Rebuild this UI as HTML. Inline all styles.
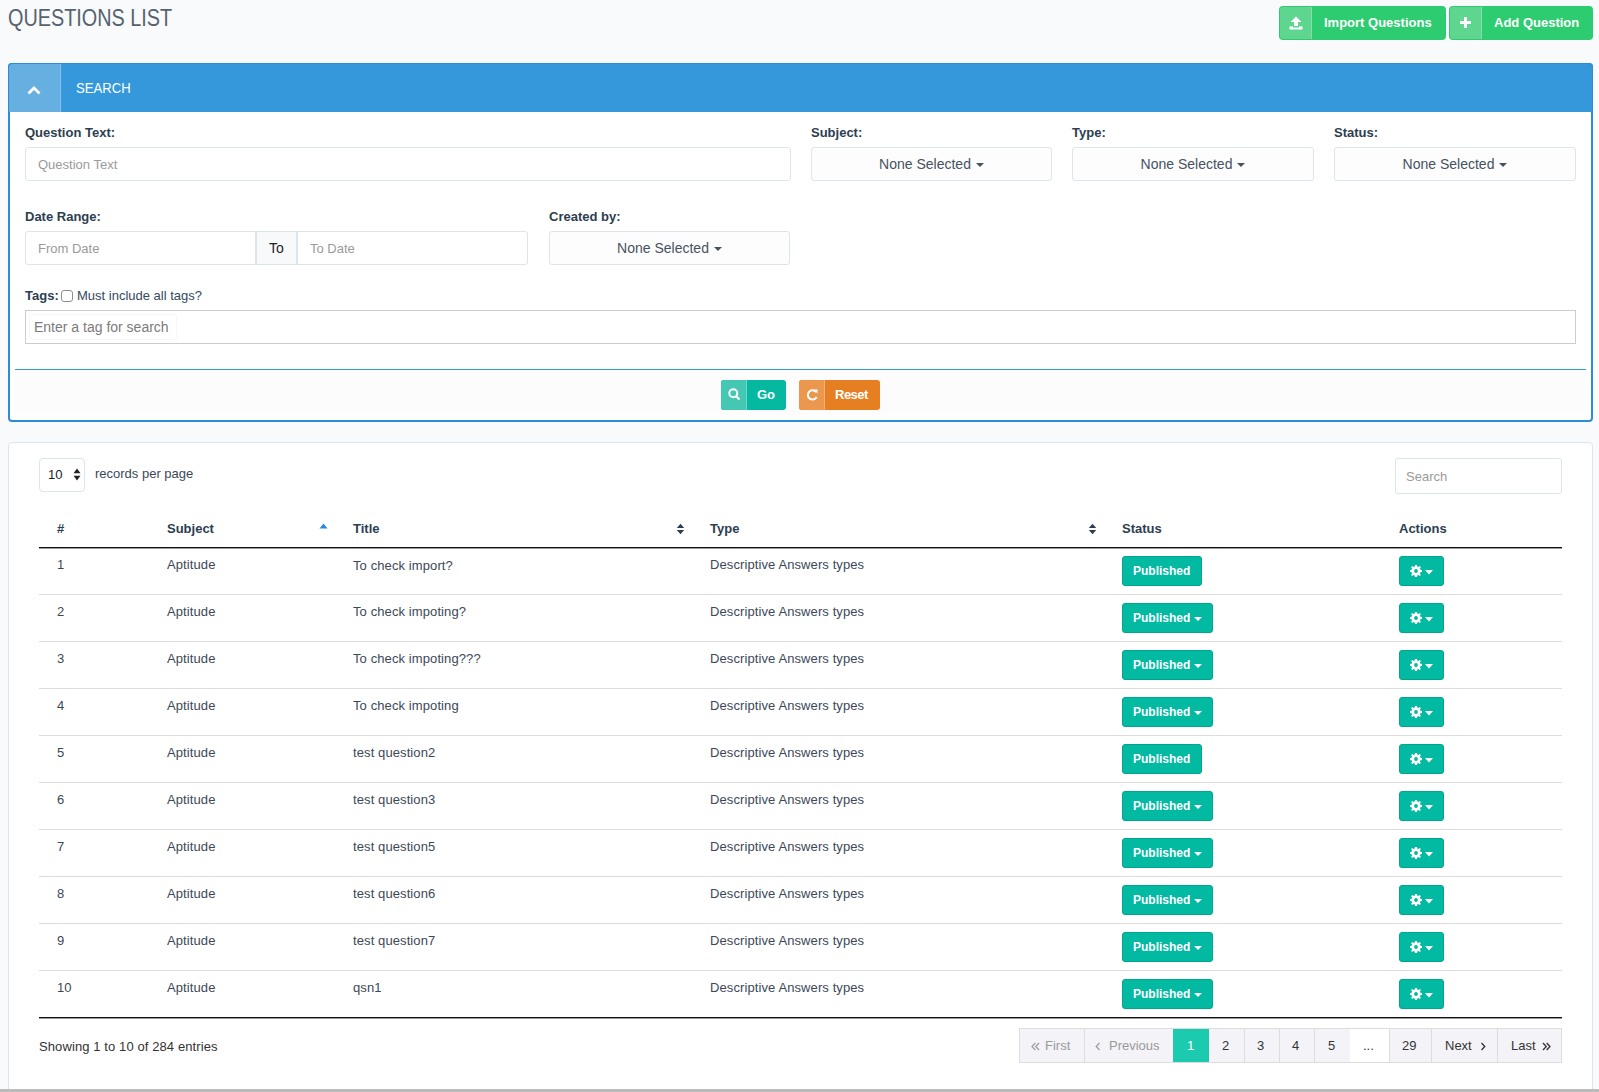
<!DOCTYPE html>
<html><head><meta charset="utf-8">
<style>
*{box-sizing:border-box;margin:0;padding:0}
html,body{width:1599px;height:1092px;overflow:hidden}
body{background:#f9fafc;font-family:"Liberation Sans",sans-serif;font-size:13px;color:#34495e;position:relative}
.abs{position:absolute}
.t{position:absolute;white-space:nowrap;line-height:16px}
.b{font-weight:bold}
/* title */
#title{left:8px;top:3px;font-size:23px;line-height:30px;color:#56636f;transform:scaleX(0.862);transform-origin:0 0}
/* green buttons */
.gbtn{position:absolute;top:6px;height:34px;background:#2ecc71;border-radius:4px;color:#fff;font-weight:bold;font-size:13px}
.gbtn .ic{position:absolute;left:1px;top:1px;width:32px;height:32px;background:#5fd690;border-radius:3px 0 0 3px;border-right:1px solid #7fdfa7}
.gbtn .tx{position:absolute;top:9px;line-height:16px;white-space:nowrap}
/* panel */
#sp{left:8px;top:63px;width:1585px;height:359px;border:2px solid #2d8bd7;border-radius:4px;background:#fff}
#sph{position:absolute;left:-2px;top:-2px;width:1585px;height:49px;background:#3498db;border-radius:4px 4px 0 0;border:1px solid #2d8bd7;border-bottom:0}
#tog{position:absolute;left:0;top:0;width:52px;height:48px;background:#66afe1;border-radius:4px 0 0 0;border-right:1px solid #86c1ea}
.lbl{position:absolute;font-weight:bold;color:#2c3e50;white-space:nowrap;line-height:16px}
.inp{position:absolute;height:34px;border:1px solid #dce4ec;border-radius:3px;background:#fff}
.ph{position:absolute;color:#9a9a9a;white-space:nowrap;line-height:16px}
.sel{position:absolute;height:34px;border:1px solid #dce4ec;border-radius:3px;background:#fdfdfe;color:#46525f;font-size:14px;text-align:center;line-height:32px}
.caret{display:inline-block;width:0;height:0;border-left:4px solid transparent;border-right:4px solid transparent;border-top:4px solid currentColor;vertical-align:middle;margin-left:5px;position:relative;top:0}
/* table panel */
#tp{left:8px;top:442px;width:1585px;height:700px;border:1px solid #dde6ef;border-radius:4px;background:#fff}
.row{position:absolute;left:39px;width:1523px;height:1px;background:#dddddd}
.pub{position:absolute;height:30px;background:#02b9a1;border:1px solid #00a68d;border-radius:3px;color:#fff;font-weight:bold;font-size:12px;line-height:28px;padding-left:10px;white-space:nowrap}
.gear{position:absolute;width:45px;height:30px;background:#02b9a1;border:1px solid #00a68d;border-radius:3px}
.td{color:#3c4858;letter-spacing:0.1px}
.th{font-weight:bold;color:#2c3e50}
.pgt{top:1038px;color:#333}
.pg{position:absolute;top:1028px;height:34px;border:1px solid #dddddd;background:#f3f3f8;color:#333;font-size:13px;line-height:32px;text-align:center;white-space:nowrap}
</style></head>
<body>
<div id="title" class="t">QUESTIONS LIST</div>

<div class="gbtn" style="left:1279px;width:167px"><div class="ic"></div><div class="tx" style="left:45px">Import Questions</div></div>
<div class="gbtn" style="left:1449px;width:144px"><div class="ic"></div><div class="tx" style="left:45px">Add Question</div></div>

<div id="sp" class="abs">
  <div id="sph"><div id="tog"></div>
    <div class="t" style="left:67px;top:16px;color:#fff;font-size:15px;transform:scaleX(0.875);transform-origin:0 0">SEARCH</div>
  </div>
</div>


<!-- icons on green buttons -->
<svg class="abs" style="left:1289px;top:16px" width="14" height="14" viewBox="0 0 14 14"><path d="M7 0.5 L12.5 6 H9 V10 H5 V6 H1.5 Z" fill="#fff"/><path d="M0.5 10.5 H4 V11.5 H10 V10.5 H13.5 V13.5 H0.5 Z" fill="#fff"/></svg>
<svg class="abs" style="left:1460px;top:17px" width="11" height="11" viewBox="0 0 11 11"><path d="M4 0H7V4H11V7H7V11H4V7H0V4H4Z" fill="#fff"/></svg>
<!-- chevron -->
<svg class="abs" style="left:27px;top:85px" width="14" height="10" viewBox="0 0 14 10"><path d="M1.5 8.5 L7 3 L12.5 8.5" stroke="#fff" stroke-width="2.8" fill="none"/></svg>

<!-- row 1 -->
<div class="lbl" style="left:25px;top:125px">Question Text:</div>
<div class="inp" style="left:25px;top:147px;width:766px"></div>
<div class="ph" style="left:38px;top:157px">Question Text</div>
<div class="lbl" style="left:811px;top:125px">Subject:</div>
<div class="sel" style="left:811px;top:147px;width:241px">None Selected<span class="caret"></span></div>
<div class="lbl" style="left:1072px;top:125px">Type:</div>
<div class="sel" style="left:1072px;top:147px;width:242px">None Selected<span class="caret"></span></div>
<div class="lbl" style="left:1334px;top:125px">Status:</div>
<div class="sel" style="left:1334px;top:147px;width:242px">None Selected<span class="caret"></span></div>

<!-- row 2 -->
<div class="lbl" style="left:25px;top:209px">Date Range:</div>
<div class="inp" style="left:25px;top:231px;width:231px;border-radius:3px 0 0 3px"></div>
<div class="ph" style="left:38px;top:241px">From Date</div>
<div class="inp" style="left:256px;top:231px;width:41px;border-radius:0;background:#f8f9fb;color:#222;font-size:14px;text-align:center;line-height:32px">To</div>
<div class="inp" style="left:297px;top:231px;width:231px;border-radius:0 3px 3px 0"></div>
<div class="ph" style="left:310px;top:241px">To Date</div>
<div class="lbl" style="left:549px;top:209px">Created by:</div>
<div class="sel" style="left:549px;top:231px;width:241px">None Selected<span class="caret"></span></div>

<!-- tags -->
<div class="lbl" style="left:25px;top:288px">Tags:</div>
<div class="abs" style="left:61px;top:290px;width:12px;height:12px;border:1px solid #8e8e8e;border-radius:3px;background:#fff"></div>
<div class="t" style="left:77px;top:288px;color:#34495e">Must include all tags?</div>
<div class="abs" style="left:25px;top:310px;width:1551px;height:34px;border:1px solid #cccccc;background:#fff"></div>
<div class="abs" style="left:29px;top:314px;width:148px;height:26px;border:1px solid #f7f7f7;border-radius:3px"></div>
<div class="t" style="left:34px;top:319px;font-size:14px;color:#7b7b7b">Enter a tag for search</div>

<!-- footer -->
<div class="abs" style="left:15px;top:369px;width:1571px;height:1px;background:#3498db"></div>
<div class="abs" style="left:15px;top:370px;width:1571px;height:45px;background:#fcfcfc"></div>
<div class="abs" style="left:721px;top:380px;width:65px;height:30px;background:#04b99f;border-radius:3px;overflow:hidden">
  <div class="abs" style="left:0;top:0;width:26px;height:30px;background:#45c8b3;border-right:1px solid #73d6c6"></div>
  <svg class="abs" style="left:7px;top:8px" width="13" height="14" viewBox="0 0 13 14"><circle cx="5.3" cy="5.3" r="4" stroke="#fff" stroke-width="2" fill="none"/><path d="M8 8 L11.5 11.5" stroke="#fff" stroke-width="2.2"/></svg>
  <div class="t b" style="left:36px;top:7px;font-size:13px;color:#fff">Go</div>
</div>
<div class="abs" style="left:799px;top:380px;width:81px;height:30px;background:#e67e22;border-radius:3px;overflow:hidden">
  <div class="abs" style="left:0;top:0;width:26px;height:30px;background:#eb984e;border-right:1px solid #f0b27a"></div>
  <svg class="abs" style="left:7px;top:8px" width="13" height="14" viewBox="0 0 13 14"><path d="M10.2 4.2 A4.6 4.6 0 1 0 10.6 9" stroke="#fff" stroke-width="2" fill="none"/><path d="M7.5 1.5 L11.5 1.5 L11.5 5.5 Z" fill="#fff"/></svg>
  <div class="t b" style="left:36px;top:7px;font-size:13px;color:#fff;letter-spacing:-0.5px">Reset</div>
</div>

<div id="tp" class="abs"></div>

<svg width="0" height="0" style="position:absolute"><defs>
<path id="gearp" fill="#fff" fill-rule="evenodd" d="M5 0H7L7.3 1.6 8.4 2.1 9.8 1.1 10.9 2.2 9.9 3.6 10.4 4.7 12 5V7L10.4 7.3 9.9 8.4 10.9 9.8 9.8 10.9 8.4 9.9 7.3 10.4 7 12H5L4.7 10.4 3.6 9.9 2.2 10.9 1.1 9.8 2.1 8.4 1.6 7.3 0 7V5L1.6 4.7 2.1 3.6 1.1 2.2 2.2 1.1 3.6 2.1 4.7 1.6ZM6 4.1A1.9 1.9 0 1 0 6 7.9 1.9 1.9 0 1 0 6 4.1Z"/>
</defs></svg>
<!-- length select -->
<div class="abs" style="left:39px;top:458px;width:46px;height:34px;border:1px solid #dce4ec;border-radius:4px;background:#fff"></div>
<div class="t" style="left:48px;top:467px;color:#222">10</div>
<svg class="abs" style="left:73px;top:468px" width="8" height="13" viewBox="0 0 8 13"><path d="M4 0.5L7.5 5.2H0.5Z M4 12.5L7.5 7.8H0.5Z" fill="#222"/></svg>
<div class="t" style="left:95px;top:466px;color:#3c4858">records per page</div>
<div class="abs" style="left:1395px;top:458px;width:167px;height:36px;border:1px solid #dce4ec;border-radius:3px;background:#fff"></div>
<div class="ph" style="left:1406px;top:469px">Search</div>

<!-- header -->
<div class="t th" style="left:57px;top:521px">#</div>
<div class="t th" style="left:167px;top:521px">Subject</div>
<svg class="abs" style="left:319px;top:523px" width="9" height="6" viewBox="0 0 9 6"><path d="M4.5 0.5L8.5 5.5H0.5Z" fill="#2b87de"/></svg>
<div class="t th" style="left:353px;top:521px">Title</div>
<svg class="abs" style="left:676px;top:523px" width="9" height="12" viewBox="0 0 9 12"><path d="M4.5 0.8L8.2 5H0.8Z M4.5 11.2L8.2 7H0.8Z" fill="#2c3e50"/></svg>
<div class="t th" style="left:710px;top:521px">Type</div>
<svg class="abs" style="left:1088px;top:523px" width="9" height="12" viewBox="0 0 9 12"><path d="M4.5 0.8L8.2 5H0.8Z M4.5 11.2L8.2 7H0.8Z" fill="#2c3e50"/></svg>
<div class="t th" style="left:1122px;top:521px">Status</div>
<div class="t th" style="left:1399px;top:521px">Actions</div>
<div class="abs" style="left:39px;top:547px;width:1523px;height:1px;background:#111"></div><div class="abs" style="left:39px;top:548px;width:1523px;height:1px;background:#9a9a9a"></div>
<div class="t td" style="left:57px;top:557px">1</div><div class="t td" style="left:167px;top:557px">Aptitude</div><div class="t td" style="left:353px;top:558px">To check import?</div><div class="t td" style="left:710px;top:557px">Descriptive Answers types</div><div class="pub" style="left:1122px;top:556px;width:80px">Published</div><div class="gear" style="left:1399px;top:556px"><svg class="abs" style="left:10px;top:8px" width="12" height="12" viewBox="0 0 12 12"><use href="#gearp"/></svg><svg class="abs" style="left:25px;top:13px" width="8" height="5" viewBox="0 0 8 5"><path d="M0 0H8L4 4.5Z" fill="#fff"/></svg></div>
<div class="row" style="top:594px"></div>
<div class="t td" style="left:57px;top:604px">2</div><div class="t td" style="left:167px;top:604px">Aptitude</div><div class="t td" style="left:353px;top:604px">To check impoting?</div><div class="t td" style="left:710px;top:604px">Descriptive Answers types</div><div class="pub" style="left:1122px;top:603px;width:91px">Published<span class=caret style=margin-left:4px></span></div><div class="gear" style="left:1399px;top:603px"><svg class="abs" style="left:10px;top:8px" width="12" height="12" viewBox="0 0 12 12"><use href="#gearp"/></svg><svg class="abs" style="left:25px;top:13px" width="8" height="5" viewBox="0 0 8 5"><path d="M0 0H8L4 4.5Z" fill="#fff"/></svg></div>
<div class="row" style="top:641px"></div>
<div class="t td" style="left:57px;top:651px">3</div><div class="t td" style="left:167px;top:651px">Aptitude</div><div class="t td" style="left:353px;top:651px">To check impoting???</div><div class="t td" style="left:710px;top:651px">Descriptive Answers types</div><div class="pub" style="left:1122px;top:650px;width:91px">Published<span class=caret style=margin-left:4px></span></div><div class="gear" style="left:1399px;top:650px"><svg class="abs" style="left:10px;top:8px" width="12" height="12" viewBox="0 0 12 12"><use href="#gearp"/></svg><svg class="abs" style="left:25px;top:13px" width="8" height="5" viewBox="0 0 8 5"><path d="M0 0H8L4 4.5Z" fill="#fff"/></svg></div>
<div class="row" style="top:688px"></div>
<div class="t td" style="left:57px;top:698px">4</div><div class="t td" style="left:167px;top:698px">Aptitude</div><div class="t td" style="left:353px;top:698px">To check impoting</div><div class="t td" style="left:710px;top:698px">Descriptive Answers types</div><div class="pub" style="left:1122px;top:697px;width:91px">Published<span class=caret style=margin-left:4px></span></div><div class="gear" style="left:1399px;top:697px"><svg class="abs" style="left:10px;top:8px" width="12" height="12" viewBox="0 0 12 12"><use href="#gearp"/></svg><svg class="abs" style="left:25px;top:13px" width="8" height="5" viewBox="0 0 8 5"><path d="M0 0H8L4 4.5Z" fill="#fff"/></svg></div>
<div class="row" style="top:735px"></div>
<div class="t td" style="left:57px;top:745px">5</div><div class="t td" style="left:167px;top:745px">Aptitude</div><div class="t td" style="left:353px;top:745px">test question2</div><div class="t td" style="left:710px;top:745px">Descriptive Answers types</div><div class="pub" style="left:1122px;top:744px;width:80px">Published</div><div class="gear" style="left:1399px;top:744px"><svg class="abs" style="left:10px;top:8px" width="12" height="12" viewBox="0 0 12 12"><use href="#gearp"/></svg><svg class="abs" style="left:25px;top:13px" width="8" height="5" viewBox="0 0 8 5"><path d="M0 0H8L4 4.5Z" fill="#fff"/></svg></div>
<div class="row" style="top:782px"></div>
<div class="t td" style="left:57px;top:792px">6</div><div class="t td" style="left:167px;top:792px">Aptitude</div><div class="t td" style="left:353px;top:792px">test question3</div><div class="t td" style="left:710px;top:792px">Descriptive Answers types</div><div class="pub" style="left:1122px;top:791px;width:91px">Published<span class=caret style=margin-left:4px></span></div><div class="gear" style="left:1399px;top:791px"><svg class="abs" style="left:10px;top:8px" width="12" height="12" viewBox="0 0 12 12"><use href="#gearp"/></svg><svg class="abs" style="left:25px;top:13px" width="8" height="5" viewBox="0 0 8 5"><path d="M0 0H8L4 4.5Z" fill="#fff"/></svg></div>
<div class="row" style="top:829px"></div>
<div class="t td" style="left:57px;top:839px">7</div><div class="t td" style="left:167px;top:839px">Aptitude</div><div class="t td" style="left:353px;top:839px">test question5</div><div class="t td" style="left:710px;top:839px">Descriptive Answers types</div><div class="pub" style="left:1122px;top:838px;width:91px">Published<span class=caret style=margin-left:4px></span></div><div class="gear" style="left:1399px;top:838px"><svg class="abs" style="left:10px;top:8px" width="12" height="12" viewBox="0 0 12 12"><use href="#gearp"/></svg><svg class="abs" style="left:25px;top:13px" width="8" height="5" viewBox="0 0 8 5"><path d="M0 0H8L4 4.5Z" fill="#fff"/></svg></div>
<div class="row" style="top:876px"></div>
<div class="t td" style="left:57px;top:886px">8</div><div class="t td" style="left:167px;top:886px">Aptitude</div><div class="t td" style="left:353px;top:886px">test question6</div><div class="t td" style="left:710px;top:886px">Descriptive Answers types</div><div class="pub" style="left:1122px;top:885px;width:91px">Published<span class=caret style=margin-left:4px></span></div><div class="gear" style="left:1399px;top:885px"><svg class="abs" style="left:10px;top:8px" width="12" height="12" viewBox="0 0 12 12"><use href="#gearp"/></svg><svg class="abs" style="left:25px;top:13px" width="8" height="5" viewBox="0 0 8 5"><path d="M0 0H8L4 4.5Z" fill="#fff"/></svg></div>
<div class="row" style="top:923px"></div>
<div class="t td" style="left:57px;top:933px">9</div><div class="t td" style="left:167px;top:933px">Aptitude</div><div class="t td" style="left:353px;top:933px">test question7</div><div class="t td" style="left:710px;top:933px">Descriptive Answers types</div><div class="pub" style="left:1122px;top:932px;width:91px">Published<span class=caret style=margin-left:4px></span></div><div class="gear" style="left:1399px;top:932px"><svg class="abs" style="left:10px;top:8px" width="12" height="12" viewBox="0 0 12 12"><use href="#gearp"/></svg><svg class="abs" style="left:25px;top:13px" width="8" height="5" viewBox="0 0 8 5"><path d="M0 0H8L4 4.5Z" fill="#fff"/></svg></div>
<div class="row" style="top:970px"></div>
<div class="t td" style="left:57px;top:980px">10</div><div class="t td" style="left:167px;top:980px">Aptitude</div><div class="t td" style="left:353px;top:980px">qsn1</div><div class="t td" style="left:710px;top:980px">Descriptive Answers types</div><div class="pub" style="left:1122px;top:979px;width:91px">Published<span class=caret style=margin-left:4px></span></div><div class="gear" style="left:1399px;top:979px"><svg class="abs" style="left:10px;top:8px" width="12" height="12" viewBox="0 0 12 12"><use href="#gearp"/></svg><svg class="abs" style="left:25px;top:13px" width="8" height="5" viewBox="0 0 8 5"><path d="M0 0H8L4 4.5Z" fill="#fff"/></svg></div>
<div class="abs" style="left:39px;top:1017px;width:1523px;height:1px;background:#111"></div><div class="abs" style="left:39px;top:1018px;width:1523px;height:1px;background:#9a9a9a"></div>

<div class="t" style="left:39px;top:1039px;color:#333;letter-spacing:0.1px">Showing 1 to 10 of 284 entries</div>

<!-- pagination -->
<div class="abs" style="left:1019px;top:1028px;width:543px;height:35px;border:1px solid #dddddd;background:#f3f3f8"></div>
<div class="abs" style="left:1084px;top:1029px;width:1px;height:33px;background:#dddddd"></div>
<div class="abs" style="left:1173px;top:1029px;width:36px;height:33px;background:#1ccab0"></div>
<div class="abs" style="left:1244px;top:1029px;width:1px;height:33px;background:#dddddd"></div>
<div class="abs" style="left:1279px;top:1029px;width:1px;height:33px;background:#dddddd"></div>
<div class="abs" style="left:1314px;top:1029px;width:1px;height:33px;background:#dddddd"></div>
<div class="abs" style="left:1350px;top:1029px;width:39px;height:33px;background:#ffffff"></div>
<div class="abs" style="left:1389px;top:1029px;width:1px;height:33px;background:#dddddd"></div>
<div class="abs" style="left:1431px;top:1029px;width:1px;height:33px;background:#dddddd"></div>
<div class="abs" style="left:1497px;top:1029px;width:1px;height:33px;background:#dddddd"></div>
<svg class="abs" style="left:1031px;top:1042px" width="9" height="9" viewBox="0 0 9 9"><path d="M4.3 1L1 4.5L4.3 8 M8 1L4.7 4.5L8 8" stroke="#a0a0a0" stroke-width="1.3" fill="none"/></svg>
<div class="t pgt" style="left:1045px;color:#9a9a9a">First</div>
<svg class="abs" style="left:1095px;top:1042px" width="6" height="9" viewBox="0 0 6 9"><path d="M4.5 1L1.2 4.5L4.5 8" stroke="#a0a0a0" stroke-width="1.3" fill="none"/></svg>
<div class="t pgt" style="left:1109px;color:#9a9a9a">Previous</div>
<div class="t pgt" style="left:1187px;color:#fff">1</div>
<div class="t pgt" style="left:1222px">2</div>
<div class="t pgt" style="left:1257px">3</div>
<div class="t pgt" style="left:1292px">4</div>
<div class="t pgt" style="left:1328px">5</div>
<div class="t pgt" style="left:1363px">...</div>
<div class="t pgt" style="left:1402px">29</div>
<div class="t pgt" style="left:1445px">Next</div>
<svg class="abs" style="left:1480px;top:1042px" width="7" height="9" viewBox="0 0 7 9"><path d="M1.5 1L4.8 4.5L1.5 8" stroke="#333" stroke-width="1.3" fill="none"/></svg>
<div class="t pgt" style="left:1511px">Last</div>
<svg class="abs" style="left:1542px;top:1042px" width="9" height="9" viewBox="0 0 9 9"><path d="M1 1L4.3 4.5L1 8 M4.7 1L8 4.5L4.7 8" stroke="#333" stroke-width="1.3" fill="none"/></svg>


<div class="abs" style="left:0;top:1089px;width:1599px;height:3px;background:#bbbbbb"></div>
</body></html>
